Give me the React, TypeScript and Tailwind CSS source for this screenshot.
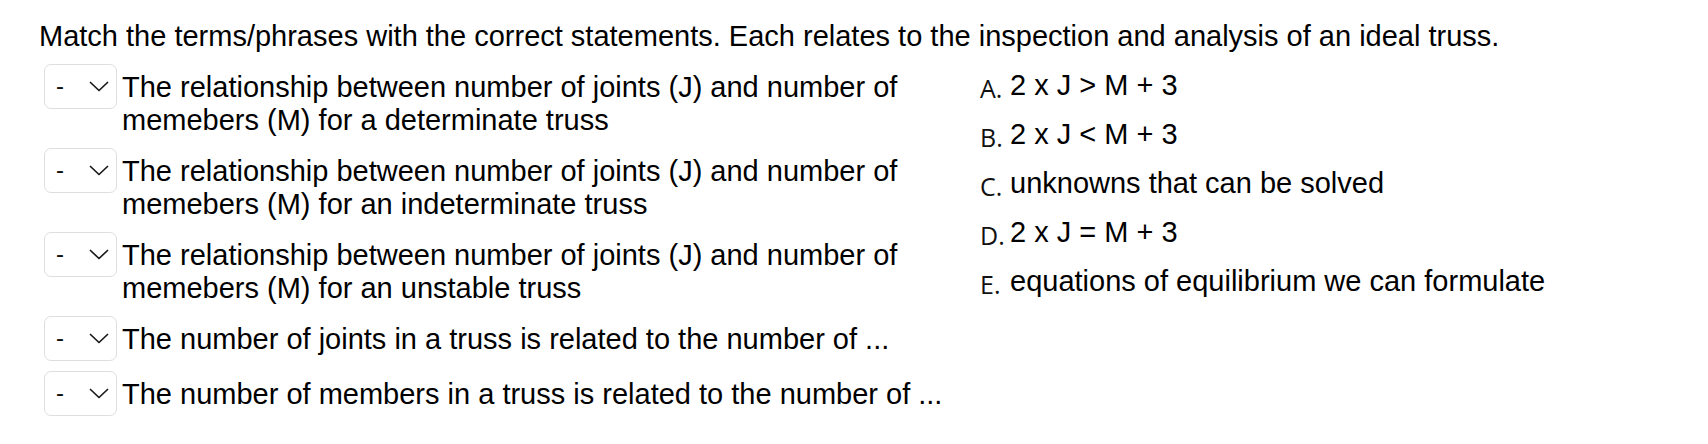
import React from "react";

const statements = [
  "The relationship between number of joints (J) and number of memebers (M) for a determinate truss",
  "The relationship between number of joints (J) and number of memebers (M) for an indeterminate truss",
  "The relationship between number of joints (J) and number of memebers (M) for an unstable truss",
  "The number of joints in a truss is related to the number of ...",
  "The number of members in a truss is related to the number of ...",
];

const options = [
  { label: "A.", text: "2 x J > M + 3" },
  { label: "B.", text: "2 x J < M + 3" },
  { label: "C.", text: "unknowns that can be solved" },
  { label: "D.", text: "2 x J = M + 3" },
  { label: "E.", text: "equations of equilibrium we can formulate" },
];

function Chevron() {
  return (
    <svg width="20" height="11" viewBox="0 0 20 11" fill="none">
      <polyline
        points="1.5,1.5 10,9.5 18.5,1.5"
        stroke="#1a1a1a"
        strokeWidth="1.7"
        strokeLinecap="round"
        strokeLinejoin="round"
      />
    </svg>
  );
}

function Dropdown() {
  return (
    <div className="flex-shrink-0 w-[73px] h-[45px] rounded-[7px] border-[1.5px] border-[#dedede] bg-white flex items-center justify-between pl-[11px] pr-[7px]">
      <span className="text-[24px] leading-none text-[#111] pb-[2px]">-</span>
      <Chevron />
    </div>
  );
}

export default function App() {
  return (
    <div className="min-h-screen bg-white text-black font-['Liberation_Sans',Arial,sans-serif] pl-[39px] pt-[20px]">
      <p className="text-[29px] leading-[33px]">
        Match the terms/phrases with the correct statements. Each relates to the inspection and analysis of an ideal truss.
      </p>

      <div className="flex mt-[11px]">
        <div className="w-[920px] pl-[5px] flex flex-col gap-[10px]">
          {statements.map((s) => (
            <div key={s} className="flex items-start gap-[5px]">
              <Dropdown />
              <p className="text-[29px] leading-[33px] pt-[7px] pb-[1px]">{s}</p>
            </div>
          ))}
        </div>

        <div className="ml-[21px] pt-[4px] flex flex-col">
          {options.map((o) => (
            <div key={o.label} className="flex items-start h-[49px]">
              <span className="w-[30px] font-['Open_Sans',sans-serif] text-[25px] leading-[33px] pt-[4px] text-[#111]">
                {o.label}
              </span>
              <span className="text-[29px] leading-[33px] pt-[1px]">{o.text}</span>
            </div>
          ))}
        </div>
      </div>
    </div>
  );
}
